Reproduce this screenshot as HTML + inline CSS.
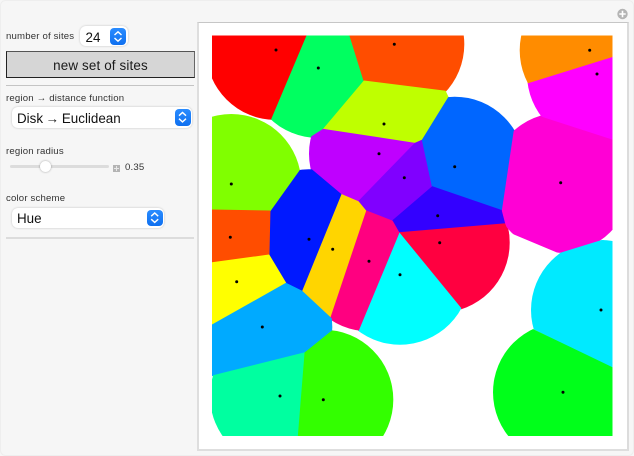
<!DOCTYPE html>
<html><head><meta charset="utf-8"><style>
html,body{margin:0;padding:0;width:634px;height:456px;overflow:hidden;background:#fff}
#p{position:absolute;left:0;top:0;width:634px;height:456px;overflow:hidden;background:#f6f6f6;font-family:"Liberation Sans",sans-serif;color:#222}
#p div{position:absolute;white-space:nowrap}
.l{font-size:9.6px;letter-spacing:.18px;color:#333;line-height:12px}
.box{background:#fff;border-radius:6px;box-shadow:0 0 2px rgba(0,0,0,.22);}
.t{font-size:13.4px;line-height:16px;color:#111;word-spacing:-1px}
.b{background:linear-gradient(#2a8cff,#0f70f0);border-radius:4px}
svg{position:absolute;left:0;top:0;display:block;overflow:hidden}
polygon{stroke-width:.9;stroke-linejoin:round}
</style></head><body><div id="p">
<div style="left:197px;top:22px;width:428px;height:426px;background:#fff;border:2px solid #dedede;border-top:1px solid #c6c6c6;border-right-color:#dcdcdc"></div>
<div class="l" style="left:6px;top:31px">number of sites</div>
<div class="box" style="left:80px;top:26px;width:48px;height:20px"></div>
<div class="t" style="left:85.5px;top:30px">24</div>
<div class="b" style="left:110px;top:28px;width:16px;height:17px"></div>
<div style="left:6px;top:51px;width:187px;height:25px;background:#d6d6d6;border:1px solid #222;border-right-color:#666;border-top-color:#555;text-align:center;font-size:13.4px;line-height:28px;color:#1a1a1a;letter-spacing:.15px">new set of sites</div>
<div style="left:6px;top:85px;width:188px;height:1px;background:#c4c4c4"></div>
<div class="l" style="left:6px;top:93px">region → distance function</div>
<div class="box" style="left:12px;top:107px;width:180px;height:20.5px"></div>
<div class="t" style="left:17px;top:110.5px">Disk → Euclidean</div>
<div class="b" style="left:174.5px;top:109px;width:16px;height:16.5px"></div>
<div class="l" style="left:6px;top:146px">region radius</div>
<div style="left:10px;top:164.5px;width:99px;height:3px;background:#dcdcdc;border-radius:2px"></div>
<div style="left:40.3px;top:160.5px;width:11px;height:11px;background:#fff;border-radius:50%;box-shadow:0 0 2px rgba(0,0,0,.35)"></div>
<div style="left:113px;top:165px;width:7px;height:7px;background:#b4b4b4"></div>
<div style="left:116px;top:166px;width:1px;height:5px;background:#e8e8e8"></div>
<div style="left:114px;top:168px;width:5px;height:1px;background:#e8e8e8"></div>
<div class="l" style="left:125px;top:162px;color:#333">0.35</div>
<div class="l" style="left:6px;top:192.5px">color scheme</div>
<div class="box" style="left:12px;top:208px;width:152px;height:20px"></div>
<div class="t" style="left:17px;top:211px">Hue</div>
<div class="b" style="left:146.7px;top:209.5px;width:16px;height:16.5px"></div>
<div style="left:6px;top:237px;width:188px;height:2px;background:#dcdcdc"></div>
<svg width="634" height="456" viewBox="0 0 634 456">
<defs>
<clipPath id="r"><rect x="212" y="35.5" width="400.5" height="400.5"/></clipPath>
<clipPath id="c1"><circle cx="276" cy="50" r="70"/></clipPath>
<clipPath id="c2"><circle cx="318.3" cy="68" r="70"/></clipPath>
<clipPath id="c3"><circle cx="394.3" cy="44.3" r="70"/></clipPath>
<clipPath id="c4"><circle cx="384" cy="124" r="70"/></clipPath>
<clipPath id="c5"><circle cx="379" cy="153.7" r="70"/></clipPath>
<clipPath id="c6"><circle cx="404.3" cy="177.7" r="70"/></clipPath>
<clipPath id="c7"><circle cx="454.7" cy="166.7" r="70"/></clipPath>
<clipPath id="c8"><circle cx="437.7" cy="215.7" r="70"/></clipPath>
<clipPath id="c9"><circle cx="439.7" cy="242.7" r="70"/></clipPath>
<clipPath id="c10"><circle cx="560.7" cy="182.7" r="70"/></clipPath>
<clipPath id="c11"><circle cx="597" cy="74" r="70"/></clipPath>
<clipPath id="c12"><circle cx="589.7" cy="50.3" r="70"/></clipPath>
<clipPath id="c13"><circle cx="601" cy="310" r="70"/></clipPath>
<clipPath id="c14"><circle cx="563" cy="392.3" r="70"/></clipPath>
<clipPath id="c15"><circle cx="400" cy="274.7" r="70"/></clipPath>
<clipPath id="c16"><circle cx="369" cy="261.3" r="70"/></clipPath>
<clipPath id="c17"><circle cx="332.7" cy="249.3" r="70"/></clipPath>
<clipPath id="c18"><circle cx="309" cy="239.3" r="70"/></clipPath>
<clipPath id="c19"><circle cx="231.3" cy="184" r="70"/></clipPath>
<clipPath id="c20"><circle cx="230.3" cy="237.3" r="70"/></clipPath>
<clipPath id="c21"><circle cx="236.7" cy="281.7" r="70"/></clipPath>
<clipPath id="c22"><circle cx="262.3" cy="327" r="70"/></clipPath>
<clipPath id="c23"><circle cx="280" cy="396" r="70"/></clipPath>
<clipPath id="c24"><circle cx="323.3" cy="399.7" r="70"/></clipPath>
</defs>
<g clip-path="url(#r)">
<polygon fill="#ff0000" stroke="#ff0000" clip-path="url(#c1)" points="200,20 320,20 307,35.5 271.3,120 260,200 200,200"/>
<polygon fill="#00ff60" stroke="#00ff60" clip-path="url(#c2)" points="307,35.5 350,35.5 364,81 323.3,129.3 310.7,137.3 300,170 260,150 271.3,120"/>
<polygon fill="#ff4d00" stroke="#ff4d00" clip-path="url(#c3)" points="345,20 480,20 480,95.4 446.7,91.3 364,81"/>
<polygon fill="#bfff00" stroke="#bfff00" clip-path="url(#c4)" points="364,81 446.7,91.3 460,88 449,96.7 422.3,140 415,143.3 323.3,129.3"/>
<polygon fill="#bf00ff" stroke="#bf00ff" clip-path="url(#c5)" points="323.3,129.3 415,143.3 358.3,201.7 341,194.3 310,168.3 295,168 295,147 310.7,137.3"/>
<polygon fill="#8000ff" stroke="#8000ff" clip-path="url(#c6)" points="415,143.3 422.3,140 432.3,186.7 392.3,221 365.7,210.7 358.3,201.7"/>
<polygon fill="#0066ff" stroke="#0066ff" clip-path="url(#c7)" points="449,96.7 440,80 530,80 514.3,130 502.3,210.7 432.3,186.7 422.3,140"/>
<polygon fill="#3300ff" stroke="#3300ff" clip-path="url(#c8)" points="432.3,186.7 502.3,210.7 505.7,223.7 399,232.7 392.3,221"/>
<polygon fill="#ff0040" stroke="#ff0040" clip-path="url(#c9)" points="399,232.7 505.7,223.7 509,232 530,330 461.7,309.3"/>
<polygon fill="#ff00d5" stroke="#ff00d5" clip-path="url(#c10)" points="514.3,130 510,110 540,115.7 625,143.2 625,233.3 603.3,240 560,253.3 509,232 505.7,223.7 502.3,210.7"/>
<polygon fill="#ff00ff" stroke="#ff00ff" clip-path="url(#c11)" points="520,85.2 625,52.6 625,143.2 540,115.7 520,109"/>
<polygon fill="#ff8c00" stroke="#ff8c00" clip-path="url(#c12)" points="500,20 625,20 625,52.6 528.3,82.7 500,91.4"/>
<polygon fill="#00eaff" stroke="#00eaff" clip-path="url(#c13)" points="625,233.3 560,253.3 510,268.7 510,317.5 534,329 625,373.8"/>
<polygon fill="#00ff1a" stroke="#00ff1a" clip-path="url(#c14)" points="480,304 625,373.8 625,448 480,448"/>
<polygon fill="#00ffff" stroke="#00ffff" clip-path="url(#c15)" points="399,232.7 470,319.5 470,400 330,400 358.3,330.7"/>
<polygon fill="#ff0080" stroke="#ff0080" clip-path="url(#c16)" points="365.7,210.7 392.3,221 399,232.7 358.3,330.7 354,345 325,345 330,317.3"/>
<polygon fill="#ffd500" stroke="#ffd500" clip-path="url(#c17)" points="341,194.3 358.3,201.7 365.7,210.7 330,317.3 301.7,291"/>
<polygon fill="#0019ff" stroke="#0019ff" clip-path="url(#c18)" points="300,169 295,160 312,160 310,168.3 341,194.3 301.7,291 286,283.3 269,255 270,211"/>
<polygon fill="#80ff00" stroke="#80ff00" clip-path="url(#c19)" points="200,100 320,100 320,141 300,169 270,211 200,209.8"/>
<polygon fill="#ff4d00" stroke="#ff4d00" clip-path="url(#c20)" points="200,209.8 270,211 269,255 200,264.3"/>
<polygon fill="#ffff00" stroke="#ffff00" clip-path="url(#c21)" points="200,264.3 269,255 286,283.3 212,325 200,331.8"/>
<polygon fill="#00aaff" stroke="#00aaff" clip-path="url(#c22)" points="200,331.8 286,283.3 301.7,291 330,317.3 336,322.7 336,327.7 332.3,330.7 305,352.7 200,379"/>
<polygon fill="#00ffa0" stroke="#00ffa0" clip-path="url(#c23)" points="200,379 305,352.7 298.3,436 298,448 200,448"/>
<polygon fill="#33ff00" stroke="#33ff00" clip-path="url(#c24)" points="332.3,330.7 336,327.7 400,300 420,300 420,448 297,448 298.3,436 305,352.7"/>
</g>
<g fill="#000">
<circle cx="276" cy="50" r="1.5"/><circle cx="318.3" cy="68" r="1.5"/><circle cx="394.3" cy="44.3" r="1.5"/><circle cx="384" cy="124" r="1.5"/><circle cx="379" cy="153.7" r="1.5"/><circle cx="404.3" cy="177.7" r="1.5"/><circle cx="454.7" cy="166.7" r="1.5"/><circle cx="437.7" cy="215.7" r="1.5"/><circle cx="439.7" cy="242.7" r="1.5"/><circle cx="560.7" cy="182.7" r="1.5"/><circle cx="597" cy="74" r="1.5"/><circle cx="589.7" cy="50.3" r="1.5"/><circle cx="601" cy="310" r="1.5"/><circle cx="563" cy="392.3" r="1.5"/><circle cx="400" cy="274.7" r="1.5"/><circle cx="369" cy="261.3" r="1.5"/><circle cx="332.7" cy="249.3" r="1.5"/><circle cx="309" cy="239.3" r="1.5"/><circle cx="231.3" cy="184" r="1.5"/><circle cx="230.3" cy="237.3" r="1.5"/><circle cx="236.7" cy="281.7" r="1.5"/><circle cx="262.3" cy="327" r="1.5"/><circle cx="280" cy="396" r="1.5"/><circle cx="323.3" cy="399.7" r="1.5"/>
</g>
<g fill="none" stroke="#fff" stroke-width="1.4">
<path d="M114.5 35 L118 31.8 L121.5 35 M114.5 38 L118 41.2 L121.5 38"/>
<path d="M179 115.7 L182.5 112.5 L186 115.7 M179 118.7 L182.5 121.9 L186 118.7"/>
<path d="M151.2 216.2 L154.7 213 L158.2 216.2 M151.2 219.2 L154.7 222.4 L158.2 219.2"/>
</g>
<circle cx="622.5" cy="14" r="5.2" fill="#b4b4b4"/>
<path d="M622.5 10.8V17.2M619.3 14H625.7" stroke="#fff" stroke-width="1.6"/>
<rect x="0.5" y="0.5" width="633" height="455" rx="5" fill="none" stroke="#eee"/>
</svg>
</div></body></html>
